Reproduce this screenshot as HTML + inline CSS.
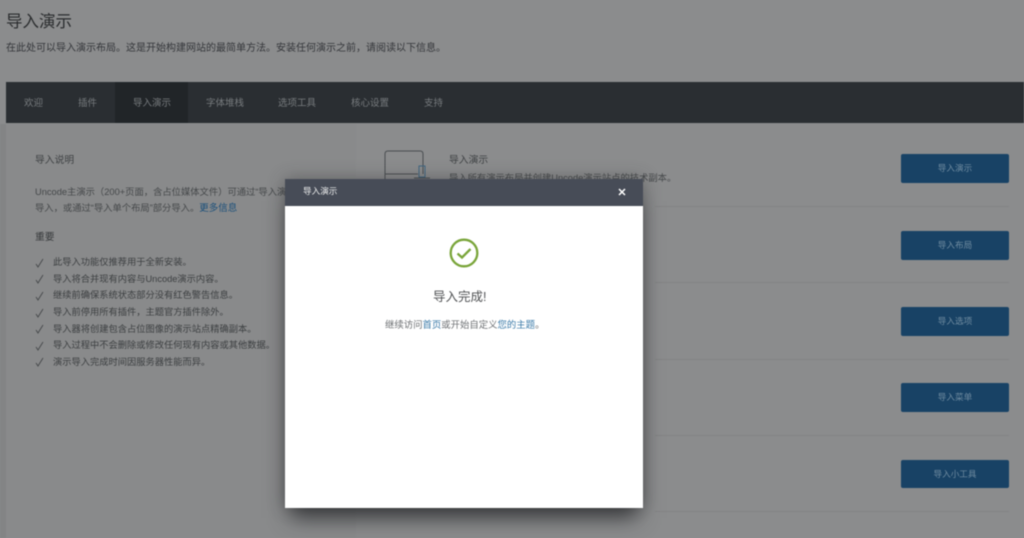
<!DOCTYPE html>
<html lang="zh-CN">
<head>
<meta charset="utf-8">
<title>导入演示</title>
<style>
html,body{margin:0;padding:0;width:1024px;height:538px;overflow:hidden;background:#8b8c8d;}
body{position:relative;font-family:"Liberation Sans","Noto Sans CJK SC",sans-serif;}
.t{position:absolute;white-space:nowrap;line-height:1;}
.bx{position:absolute;}
#page{position:absolute;left:0;top:0;width:1024px;height:538px;filter:blur(.4px);}
.tab{font-size:9.5px;color:#777b7e;top:99px;}
.body{font-size:9.3px;color:#45484a;}
.head{font-size:9.8px;color:#3f4244;}
.li{font-size:9.25px;color:#3c3f41;left:53px;}
.ck{position:absolute;left:35px;width:9px;height:10px;}
.btn{position:absolute;left:901px;width:108px;height:29px;background:#184265;border-radius:2px;color:#6f8ba0;font-size:8.6px;text-align:center;line-height:29px;}
.hr{position:absolute;left:655px;width:354px;height:1px;background:#838485;}
a{color:inherit;text-decoration:none;}
</style>
</head>
<body>
<div id="page">
  <div class="bx" style="left:0;top:124px;width:6px;height:414px;background:#838485"></div>
  <div class="bx" style="left:6px;top:124px;width:350px;height:414px;background:#898a8b"></div>

  <div class="t" style="left:6px;top:13.500px;font-size:16.5px;color:#2a2c2e">导入演示</div>
  <div class="t" style="left:6px;top:43.500px;font-size:10px;color:#34363a">在此处可以导入演示布局。这是开始构建网站的最简单方法。安装任何演示之前，请阅读以下信息。</div>

  <div class="bx" style="left:6px;top:82px;width:1018px;height:41px;background:#2a2e32"></div>
  <div class="bx" style="left:115px;top:82px;width:73px;height:41px;background:#212528"></div>
  <div class="t tab" style="left:24px">欢迎</div>
  <div class="t tab" style="left:78px">插件</div>
  <div class="t tab" style="left:133px">导入演示</div>
  <div class="t tab" style="left:206px">字体堆栈</div>
  <div class="t tab" style="left:278px">选项工具</div>
  <div class="t tab" style="left:351px">核心设置</div>
  <div class="t tab" style="left:424px">支持</div>

  <div class="t head" style="left:35px;top:155.500px">导入说明</div>
  <div class="t body" style="left:35px;top:188px">Uncode主演示（200+页面，含占位媒体文件）可通过“导入演示”部分</div>
  <div class="t body" style="left:35px;top:204px">导入，或通过“导入单个布局”部分导入。<a style="color:#1a4f7a;font-size:9.5px">更多信息</a></div>
  <div class="t head" style="left:35px;top:232.500px;color:#383b3d">重要</div>

  <svg class="ck" style="top:257.500px" viewBox="0 0 9 10"><path d="M1 6 L3 9 L8 1" fill="none" stroke="#45484a" stroke-width=".9"/></svg>
  <div class="t li" style="top:258px">此导入功能仅推荐用于全新安装。</div>
  <svg class="ck" style="top:274px" viewBox="0 0 9 10"><path d="M1 6 L3 9 L8 1" fill="none" stroke="#45484a" stroke-width=".9"/></svg>
  <div class="t li" style="top:274.500px">导入将合并现有内容与Uncode演示内容。</div>
  <svg class="ck" style="top:290.500px" viewBox="0 0 9 10"><path d="M1 6 L3 9 L8 1" fill="none" stroke="#45484a" stroke-width=".9"/></svg>
  <div class="t li" style="top:291px">继续前确保系统状态部分没有红色警告信息。</div>
  <svg class="ck" style="top:307.500px" viewBox="0 0 9 10"><path d="M1 6 L3 9 L8 1" fill="none" stroke="#45484a" stroke-width=".9"/></svg>
  <div class="t li" style="top:308px">导入前停用所有插件，主题官方插件除外。</div>
  <svg class="ck" style="top:324px" viewBox="0 0 9 10"><path d="M1 6 L3 9 L8 1" fill="none" stroke="#45484a" stroke-width=".9"/></svg>
  <div class="t li" style="top:324.500px">导入器将创建包含占位图像的演示站点精确副本。</div>
  <svg class="ck" style="top:340.500px" viewBox="0 0 9 10"><path d="M1 6 L3 9 L8 1" fill="none" stroke="#45484a" stroke-width=".9"/></svg>
  <div class="t li" style="top:341px">导入过程中不会删除或修改任何现有内容或其他数据。</div>
  <svg class="ck" style="top:357px" viewBox="0 0 9 10"><path d="M1 6 L3 9 L8 1" fill="none" stroke="#45484a" stroke-width=".9"/></svg>
  <div class="t li" style="top:357.500px">演示导入完成时间因服务器性能而异。</div>

  <svg class="bx" style="left:380px;top:148px;width:50px;height:32px" viewBox="0 0 50 32" fill="none">
    <path d="M5 32 V6 Q5 3 8 3 H40 Q43 3 43 6 V26" stroke="#4a4e51" stroke-width="1"/>
    <path d="M5 26 H38" stroke="#4a4e51" stroke-width="1"/>
    <rect x="39" y="18" width="6" height="11" stroke="#3f6580" stroke-width="1"/>
    <path d="M34 30 H50" stroke="#4a4e51" stroke-width="1"/>
  </svg>
  <div class="t head" style="left:449px;top:155.500px">导入演示</div>
  <div class="t body" style="left:449px;top:174px">导入所有演示布局并创建Uncode演示站点的技术副本。</div>

  <div class="btn" style="top:154px">导入演示</div>
  <div class="hr" style="top:206px"></div>
  <div class="btn" style="top:231px">导入布局</div>
  <div class="hr" style="top:282px"></div>
  <div class="btn" style="top:307px">导入选项</div>
  <div class="hr" style="top:359px"></div>
  <div class="btn" style="top:383px">导入菜单</div>
  <div class="hr" style="top:435px"></div>
  <div class="btn" style="top:459.500px;height:28px;line-height:28px">导入小工具</div>
  <div class="hr" style="top:511px"></div>

  <div class="bx" style="left:285px;top:179px;width:358px;height:329px;background:#fff;box-shadow:0 16px 20px -6px rgba(30,32,34,.7),0 0 16px rgba(50,52,54,.45)"></div>
  <div class="bx" style="left:285px;top:179px;width:358px;height:27px;background:#474c57"></div>
  <div class="t" style="left:303px;top:187px;font-size:8.6px;color:#eceded">导入演示</div>
  <svg class="bx" style="left:617.500px;top:187.500px;width:8px;height:8px" viewBox="0 0 8 8"><path d="M1 1 L7 7 M7 1 L1 7" stroke="#fff" stroke-width="1.500" fill="none"/></svg>

  <svg class="bx" style="left:449px;top:238px;width:30px;height:30px" viewBox="0 0 30 30" fill="none">
    <circle cx="15" cy="15" r="13.300" stroke="#7aa53a" stroke-width="2.300"/>
    <path d="M8.500 15.500 L13 19.500 L21.500 11" stroke="#7aa53a" stroke-width="2.300"/>
  </svg>
  <div class="t" style="left:433px;top:291px;font-size:12.500px;color:#4f5153">导入完成!</div>
  <div class="t" style="left:385px;top:320px;font-size:9.4px;color:#6d7073">继续访问<a style="color:#3a7aa8">首页</a>或开始自定义<a style="color:#3a7aa8">您的主题</a>。</div>
</div>
</body>
</html>
